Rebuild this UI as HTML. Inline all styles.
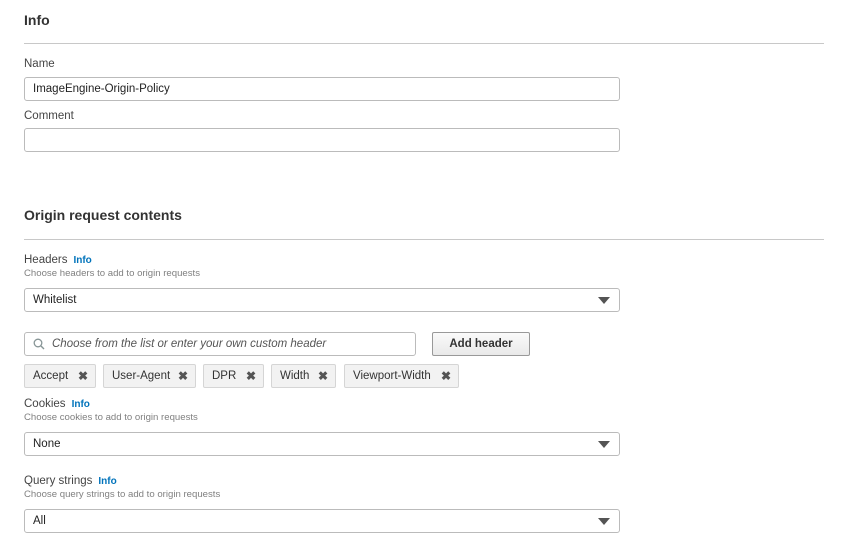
<!DOCTYPE html>
<html><head><meta charset="utf-8"><style>
body{margin:0;width:847px;height:546px;background:#fff;font-family:"Liberation Sans",Arial,sans-serif;color:#16191f;position:relative;overflow:hidden}
.a{position:absolute}
.h{font-weight:bold;font-size:14px;color:#333}
.hr{left:24px;width:800px;height:1px;background:#c8c8c8}
.lb{font-size:11.5px;color:#444;left:24px}
.lb b{color:#0073bb;font-size:10px;margin-left:6px}
.ds{font-size:9.6px;color:#808080;left:24px}
.in{left:24px;width:594px;height:22px;border:1px solid #bbb;border-radius:3px;font-size:11.5px;line-height:23px;box-sizing:content-box;color:#222}
.in span{margin-left:8px}
.arr{position:absolute;right:9px;top:8px;width:0;height:0;border-left:6px solid transparent;border-right:6px solid transparent;border-top:7px solid #545454}
.tag{top:364px;height:22px;border:1px solid #d5d5d5;background:#f2f2f2;border-radius:2px;font-size:11.5px;line-height:23px;padding-left:8px;box-sizing:content-box;color:#333}
.tag i{font-style:normal;font-weight:bold;color:#545454;position:absolute;right:7px;font-size:12px}
</style></head><body>
<div class="a h" style="left:24px;top:12px">Info</div>
<div class="a hr" style="top:43px"></div>
<div class="a lb" style="top:58px">Name</div>
<div class="a in" style="top:77px"><span>ImageEngine-Origin-Policy</span></div>
<div class="a lb" style="top:110px">Comment</div>
<div class="a in" style="top:128px"></div>
<div class="a h" style="left:24px;top:207px">Origin request contents</div>
<div class="a hr" style="top:239px"></div>
<div class="a lb" style="top:254px">Headers<b>Info</b></div>
<div class="a ds" style="top:268px">Choose headers to add to origin requests</div>
<div class="a in" style="top:288px"><span>Whitelist</span><div class="arr"></div></div>
<div class="a in" style="top:332px;width:390px;color:#555;font-style:italic">
<svg style="position:absolute;left:8px;top:5px" width="12" height="12" viewBox="0 0 12 12"><circle cx="5" cy="5" r="3.8" fill="none" stroke="#879596" stroke-width="1.3"/><path d="M8 8l3 3" stroke="#879596" stroke-width="1.4"/></svg>
<span style="margin-left:27px">Choose from the list or enter your own custom header</span></div>
<div class="a" style="left:432px;top:332px;width:96px;height:22px;border:1px solid #999;border-radius:2px;background:linear-gradient(#fafafa,#e9e9e9);font-size:11.5px;font-weight:bold;text-align:center;line-height:23px;color:#333">Add header</div>
<div class="a tag" style="left:24px;width:62px">Accept<i>✖</i></div>
<div class="a tag" style="left:103px;width:83px">User-Agent<i>✖</i></div>
<div class="a tag" style="left:203px;width:51px">DPR<i>✖</i></div>
<div class="a tag" style="left:271px;width:55px">Width<i>✖</i></div>
<div class="a tag" style="left:344px;width:105px">Viewport-Width<i>✖</i></div>
<div class="a lb" style="top:398px">Cookies<b>Info</b></div>
<div class="a ds" style="top:412px">Choose cookies to add to origin requests</div>
<div class="a in" style="top:432px"><span>None</span><div class="arr"></div></div>
<div class="a lb" style="top:475px">Query strings<b>Info</b></div>
<div class="a ds" style="top:489px">Choose query strings to add to origin requests</div>
<div class="a in" style="top:509px"><span>All</span><div class="arr"></div></div>
</body></html>
